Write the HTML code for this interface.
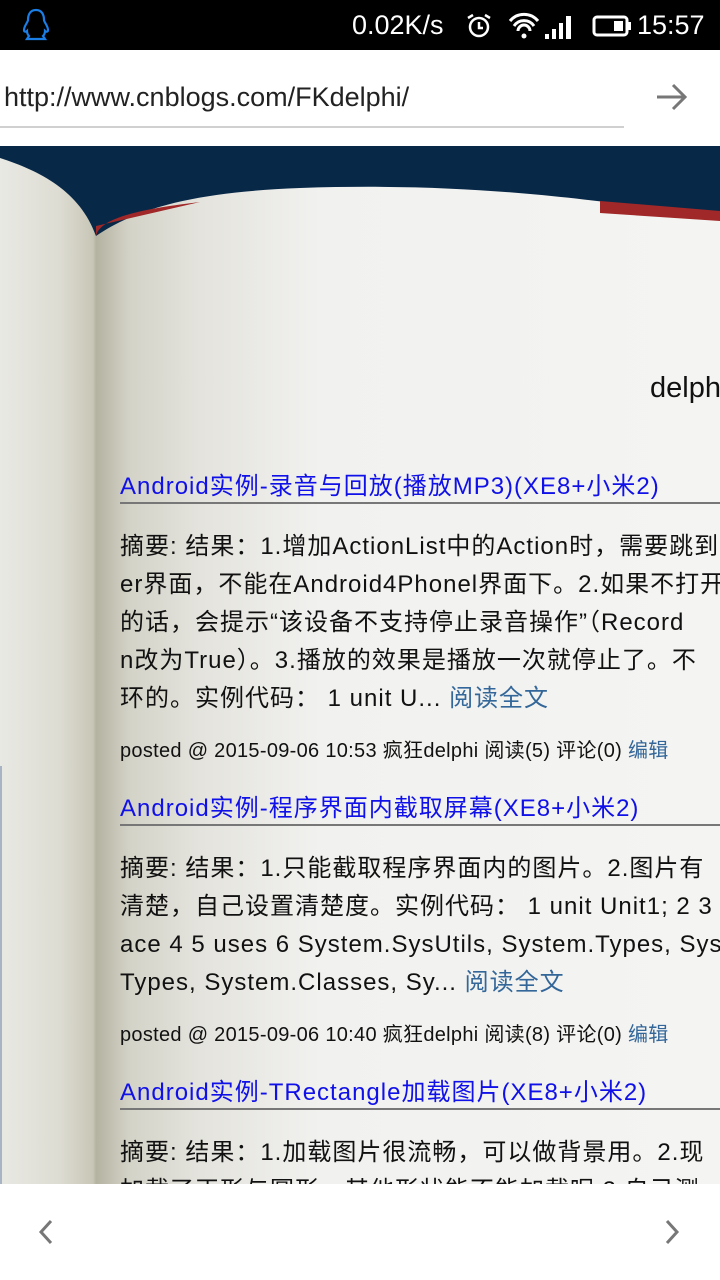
<!DOCTYPE html>
<html><head><meta charset="utf-8"><style>
*{margin:0;padding:0;box-sizing:border-box}
body{width:720px;height:1280px;overflow:hidden;position:relative;background:#f4f4f2;font-family:"Liberation Sans","Noto Sans CJK SC",sans-serif}
.sb{position:absolute;left:0;top:0;width:720px;height:50px;background:#000;color:#fff}
.url{position:absolute;top:50px;left:0;width:720px;height:96px;background:#fff}
.page{position:absolute;top:146px;left:0;width:720px;height:1038px;overflow:hidden;background:linear-gradient(90deg,#e9e9e4 0,#dddcd2 60px,#c8c6b6 93px,#b4b2a0 96px,#d4d3c8 130px,#e4e3dd 200px,#f1f1ef 320px,#f4f4f2 720px)}
.c{position:absolute;left:120px;width:620px;font-size:24px;color:#111;letter-spacing:1px}
.t{color:#1010e8;font-size:24px;height:38px;border-bottom:2px solid #777;white-space:nowrap}
.b{line-height:38px;white-space:nowrap;margin-top:24px}
.b a{color:#336699}
.p{font-size:20px;margin-top:16px;height:54px;white-space:nowrap;letter-spacing:0.3px}
.p a{color:#336699}
.bot{position:absolute;top:1184px;left:0;width:720px;height:96px;background:#fff}
</style></head><body>
<div class="sb">
<svg style="position:absolute;left:20px;top:8px" width="32" height="34" viewBox="0 0 32 34"><path d="M16 2c-6 0-8 5-8 10 0 2-4 6-4 10 0 2 2 2 3 1 0 3 2 5 2 5l-2 3h18l-2-3s2-2 2-5c1 1 3 1 3-1 0-4-4-8-4-10 0-5-2-10-8-10z" fill="none" stroke="#1a7ee6" stroke-width="2.2"/></svg>
<div style="position:absolute;left:352px;top:10px;font-size:27px">0.02K/s</div>
<svg style="position:absolute;left:465px;top:13px" width="28" height="26" viewBox="0 0 28 26"><circle cx="14" cy="14" r="9" fill="none" stroke="#fff" stroke-width="2.5"/><path d="M14 9v6h4M3 5l5-3M25 5l-5-3" stroke="#fff" stroke-width="2.5" fill="none"/></svg>
<svg style="position:absolute;left:508px;top:12px" width="75" height="28" viewBox="0 0 75 28"><path d="M2 9a18 18 0 0 1 28 0M6 14a12 12 0 0 1 20 0M10 19a6 6 0 0 1 12 0" stroke="#fff" stroke-width="3" fill="none"/><circle cx="16" cy="24" r="2.5" fill="#fff"/><rect x="37" y="22" width="4" height="5" fill="#fff"/><rect x="44" y="17" width="4" height="10" fill="#fff"/><rect x="51" y="11" width="4" height="16" fill="#fff"/><rect x="58" y="4" width="5" height="23" fill="#fff"/></svg>
<svg style="position:absolute;left:592px;top:15px" width="40" height="22" viewBox="0 0 40 22"><rect x="2" y="2" width="33" height="18" rx="3" fill="none" stroke="#fff" stroke-width="3"/><rect x="22" y="6" width="9" height="10" fill="#fff"/><rect x="36" y="7" width="3" height="8" fill="#fff"/></svg>
<div style="position:absolute;left:637px;top:10px;font-size:27px">15:57</div>
</div>
<div class="url">
<div style="position:absolute;left:4px;top:32px;font-size:27px;color:#222">http://www.cnblogs.com/FKdelphi/</div>
<div style="position:absolute;left:0;top:76px;width:624px;height:2px;background:#d0d0d0"></div>
<svg style="position:absolute;left:654px;top:31px" width="36" height="32" viewBox="0 0 36 32"><path d="M3 16h28M19 4l12 12-12 12" stroke="#777" stroke-width="3" fill="none"/></svg>
</div>
<div class="page">
<svg style="position:absolute;left:0;top:0" width="720" height="120" viewBox="0 0 720 120"><path d="M0 0h720v70C620 60 500 35 300 42 200 46 140 60 96 90 80 45 40 25 0 12z" fill="#082848"/><path d="M96 90C100 70 150 62 200 56L96 80z" fill="#a02828"/><path d="M600 55l120 10v10l-120-8z" fill="#a02828"/></svg>
<div style="position:absolute;left:0;top:620px;width:2px;height:420px;background:#a8b4c4"></div>
<div style="position:absolute;left:650px;top:226px;font-size:29px;color:#111">delphi</div>
<div class="c" style="top:320px">
<div class="t">Android实例-录音与回放(播放MP3)(XE8+小米2)</div>
<div class="b">摘要: 结果：1.增加ActionList中的Action时，需要跳到<br>er界面，不能在Android4Phonel界面下。2.如果不打开<br>的话，会提示“该设备不支持停止录音操作”（Record<br>n改为True）。3.播放的效果是播放一次就停止了。不<br>环的。实例代码： 1 unit U... <a>阅读全文</a></div>
<div class="p">posted @ 2015-09-06 10:53 疯狂delphi 阅读(5) 评论(0) <a>编辑</a></div>
<div class="t">Android实例-程序界面内截取屏幕(XE8+小米2)</div>
<div class="b">摘要: 结果：1.只能截取程序界面内的图片。2.图片有<br>清楚，自己设置清楚度。实例代码： 1 unit Unit1; 2 3<br>ace 4 5 uses 6 System.SysUtils, System.Types, Syst<br>Types, System.Classes, Sy... <a>阅读全文</a></div>
<div class="p">posted @ 2015-09-06 10:40 疯狂delphi 阅读(8) 评论(0) <a>编辑</a></div>
<div class="t">Android实例-TRectangle加载图片(XE8+小米2)</div>
<div class="b">摘要: 结果：1.加载图片很流畅，可以做背景用。2.现<br>加载了正形与圆形，其他形状能不能加载呢 3.自己测</div>
</div>
</div>
<div class="bot">
<svg style="position:absolute;left:36px;top:34px" width="20" height="28" viewBox="0 0 20 28"><path d="M15 3L5 14l10 11" stroke="#777" stroke-width="3" fill="none"/></svg>
<svg style="position:absolute;left:662px;top:34px" width="20" height="28" viewBox="0 0 20 28"><path d="M5 3l10 11-10 11" stroke="#777" stroke-width="3" fill="none"/></svg>
</div>
</body></html>
